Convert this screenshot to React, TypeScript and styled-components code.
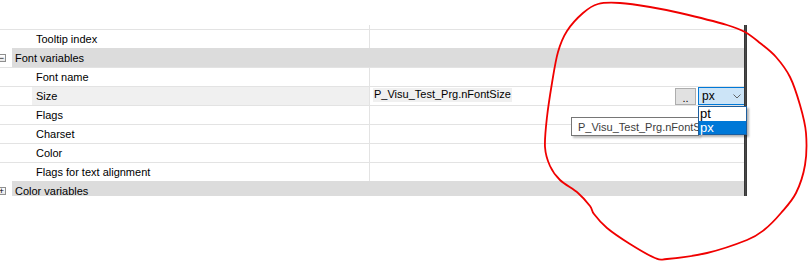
import React from "react";
import styled, { createGlobalStyle } from "styled-components";

const Global = createGlobalStyle`
  html, body { margin: 0; padding: 0; background: #ffffff; }
  body { font-family: "Liberation Sans", Arial, sans-serif; font-size: 11px; color: #000; }
`;

const Page = styled.div`
  position: relative;
  width: 808px;
  height: 261px;
  overflow: hidden;
  background: #fff;
`;

const Panel = styled.div`
  display: flex;
  padding-top: 25px;
`;

const Grid = styled.div`
  width: 744px;
  height: 171px;
  overflow: hidden;
`;

const Scroller = styled.div`
  display: flex;
  flex-direction: column;
  margin-top: -15px;
`;

const Splitter = styled.div`
  width: 3px;
  height: 171px;
  background: linear-gradient(90deg, #2e2e2e, #4a4a4a, #333);
`;

const PropRowBox = styled.div`
  display: grid;
  grid-template-columns: 370px 1fr;
  height: 19px;
  box-sizing: border-box;
  border-top: 1px solid #e3e3e3;
`;

const LabelCell = styled.div`
  display: flex;
  padding-left: 32px;
  border-right: 1px solid #e3e3e3;
  min-width: 0;
`;

const Label = styled.div<{ $selected?: boolean }>`
  flex: 1;
  display: flex;
  align-items: center;
  padding-left: 4px;
  background: ${(p) => (p.$selected ? "#f0f0f0" : "transparent")};
  white-space: nowrap;
`;

const ValueCell = styled.div`
  display: flex;
  align-items: center;
  padding-left: 3px;
  min-width: 0;
`;

const ValueText = styled.span`
  background: #f0f0f0;
  padding: 1px 1px 2px;
  line-height: 11px;
  white-space: nowrap;
  align-self: flex-start;
  margin-top: 1px;
`;

const Spacer = styled.div`
  flex: 1;
`;

const EllipsisButton = styled.div`
  width: 21px;
  height: 17px;
  box-sizing: border-box;
  border: 1px solid #adadad;
  background: #e1e1e1;
  display: flex;
  align-items: flex-end;
  justify-content: center;
  line-height: 12px;
  margin-right: 2px;
  color: #000;
`;

const UnitSelect = styled.div`
  width: 46px;
  height: 18px;
  box-sizing: border-box;
  border: 1px solid #0078d7;
  border-right: none;
  background: #cce4f7;
  display: flex;
  align-items: center;
  padding-left: 3px;
  font-size: 12px;
`;

const UnitText = styled.span`
  flex: 1;
`;

const Chevron = styled.svg`
  margin-right: 3px;
`;

const CatRowBox = styled.div`
  display: grid;
  grid-template-columns: 12px 1fr;
  height: 19px;
`;

const ToggleCell = styled.div`
  display: flex;
  align-items: center;
  background: #fff;
`;

const ToggleBox = styled.div`
  width: 9px;
  height: 8px;
  box-sizing: border-box;
  margin-left: -3px;
  border: 1px solid #8f8f8f;
  background: linear-gradient(#fff, #e8e8e8);
  display: flex;
  align-items: center;
  justify-content: center;
  font-size: 9px;
  line-height: 6px;
  color: #000;
`;

const CatTitle = styled.div`
  background: #dcdcdc;
  display: flex;
  align-items: center;
  padding-left: 3px;
  white-space: nowrap;
`;

const Tooltip = styled.div`
  position: absolute;
  left: 571px;
  top: 117px;
  width: 128px;
  height: 19px;
  box-sizing: border-box;
  border: 1px solid #767676;
  border-right: none;
  background: #fff;
  padding: 0 0 0 6px;
  display: flex;
  align-items: center;
  overflow: hidden;
  color: #3c3c3c;
  font-size: 11px;
  white-space: nowrap;
  box-shadow: 2px 2px 2px rgba(0, 0, 0, 0.25);
`;

const DropList = styled.div`
  position: absolute;
  left: 698px;
  top: 106px;
  width: 49px;
  box-sizing: border-box;
  border: 1px solid #1b5d9e;
  background: #fff;
  display: flex;
  flex-direction: column;
  font-size: 13px;
  box-shadow: 2px 2px 2px rgba(0, 0, 0, 0.3);
`;

const DropItem = styled.div<{ $active?: boolean }>`
  height: 13.5px;
  line-height: 13px;
  padding-left: 1px;
  background: ${(p) => (p.$active ? "#0078d7" : "#fff")};
  color: ${(p) => (p.$active ? "#fff" : "#000")};
`;

const Scribble = styled.svg`
  position: absolute;
  left: 0;
  top: 0;
  pointer-events: none;
`;

type PropRowProps = {
  label?: string;
  selected?: boolean;
  children?: React.ReactNode;
};

function PropRow({ label = "", selected, children }: PropRowProps) {
  return (
    <PropRowBox>
      <LabelCell>
        <Label $selected={selected}>{label}</Label>
      </LabelCell>
      <ValueCell>{children}</ValueCell>
    </PropRowBox>
  );
}

function CategoryRow({ label, expanded }: { label: string; expanded?: boolean }) {
  return (
    <CatRowBox>
      <ToggleCell>
        <ToggleBox>{expanded ? "−" : "+"}</ToggleBox>
      </ToggleCell>
      <CatTitle>{label}</CatTitle>
    </CatRowBox>
  );
}

const circlePts: [number, number][] = [
  [598, 4], [620, 3], [650, 7], [680, 13], [727, 25], [745, 32], [760, 43],
  [776, 57], [790, 77], [800, 105], [806, 133], [805, 165], [796, 193],
  [781, 213], [764, 230], [747, 240], [707, 253], [667, 259], [655, 258],
  [630, 244], [607, 228], [594, 214], [590, 206], [578, 193], [560, 180],
  [550, 166], [545, 147], [547, 117], [552, 83], [558, 52], [567, 31], [583, 13],
];

function smoothClosed(pts: [number, number][]) {
  const n = pts.length;
  let d = `M${pts[0][0]},${pts[0][1]}`;
  for (let i = 0; i < n; i++) {
    const p0 = pts[(i - 1 + n) % n];
    const p1 = pts[i];
    const p2 = pts[(i + 1) % n];
    const p3 = pts[(i + 2) % n];
    const c1x = p1[0] + (p2[0] - p0[0]) / 6;
    const c1y = p1[1] + (p2[1] - p0[1]) / 6;
    const c2x = p2[0] - (p3[0] - p1[0]) / 6;
    const c2y = p2[1] - (p3[1] - p1[1]) / 6;
    d += ` C${c1x.toFixed(1)},${c1y.toFixed(1)} ${c2x.toFixed(1)},${c2y.toFixed(1)} ${p2[0]},${p2[1]}`;
  }
  return d;
}

export default function App() {
  return (
    <Page>
      <Global />
      <Panel>
        <Grid>
          <Scroller>
            <PropRow />
            <PropRow label="Tooltip index" />
            <CategoryRow label="Font variables" expanded />
            <PropRow label="Font name" />
            <PropRow label="Size" selected>
              <ValueText>P_Visu_Test_Prg.nFontSize</ValueText>
              <Spacer />
              <EllipsisButton>..</EllipsisButton>
              <UnitSelect>
                <UnitText>px</UnitText>
                <Chevron width="8" height="5" viewBox="0 0 8 5">
                  <polyline points="0.5,0.5 4,4 7.5,0.5" fill="none" stroke="#555" strokeWidth="0.9" />
                </Chevron>
              </UnitSelect>
            </PropRow>
            <PropRow label="Flags" />
            <PropRow label="Charset" />
            <PropRow label="Color" />
            <PropRow label="Flags for text alignment" />
            <CategoryRow label="Color variables" />
          </Scroller>
        </Grid>
        <Splitter />
      </Panel>
      <Tooltip>P_Visu_Test_Prg.nFontSize</Tooltip>
      <DropList>
        <DropItem>pt</DropItem>
        <DropItem $active>px</DropItem>
      </DropList>
      <Scribble width="808" height="261" viewBox="0 0 808 261">
        <path d={smoothClosed(circlePts)} fill="none" stroke="#f00000" strokeWidth="1.8" strokeLinejoin="round" />
      </Scribble>
    </Page>
  );
}
